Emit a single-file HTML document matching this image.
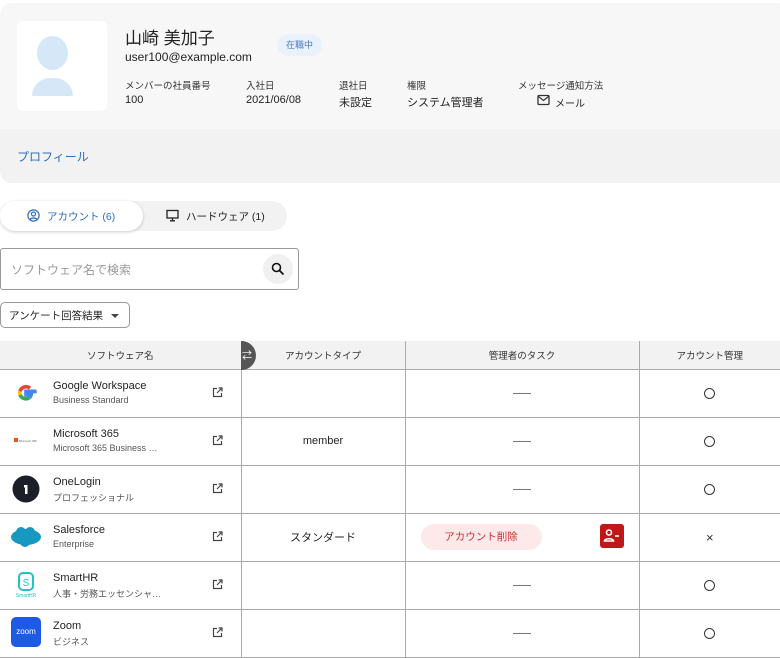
<!DOCTYPE html>
<html><head><meta charset="utf-8"><style>
*{box-sizing:border-box;margin:0;padding:0}
body{width:780px;height:656px;overflow:hidden;background:#fff;font-family:"Liberation Sans","Noto Sans CJK JP",sans-serif;color:#222;position:relative}
.a{position:absolute}
.card{left:0;top:3px;width:790px;height:180px;background:#f7f7f7;border-radius:12px;overflow:hidden}
.band{left:0;top:126px;width:790px;height:54px;background:#f2f2f2}
.lbl{font-size:9.5px;color:#333}
.val{font-size:11px;color:#222}
table{position:absolute;left:0;top:341px;border-collapse:collapse;width:780px;table-layout:fixed}
th{height:28px;background:#f2f2f2;font-size:9.5px;font-weight:normal;color:#333;border-bottom:1px solid #aaa;border-right:1px solid #aaa;padding:0}
td{height:48px;border-bottom:1px solid #aaa;border-right:1px solid #aaa;font-size:11px;text-align:center;position:relative;padding:0}
th:last-child,td:last-child{border-right:none}
.sw{text-align:left}
.ic{position:absolute;left:12px;top:9px;width:28px;height:28px}
.nm{position:absolute;left:53px;top:10px;font-size:11px;color:#222}
.sb{position:absolute;left:53px;top:25px;font-size:9px;color:#555;white-space:nowrap}
.ext{position:absolute;left:212px;top:17px}
.dash{display:inline-block;width:18px;border-top:1px solid #777;vertical-align:middle}
.circ{display:inline-block;width:11px;height:11px;border:1.3px solid #333;border-radius:50%;vertical-align:middle}
</style></head><body>
<div class="a card"><div class="a band"></div></div>
<div class="a" style="left:17px;top:21px;width:90px;height:90px;background:#fff;border-radius:6px"></div>
<div class="a" style="left:37px;top:36px;width:31px;height:34px;background:#d6e8f8;border-radius:50%"></div>
<div class="a" style="left:32px;top:78px;width:41px;height:18px;background:#d6e8f8;border-radius:20px 20px 0 0"></div>
<div class="a" style="left:125px;top:24px;font-size:17px;color:#222">山崎 美加子</div>
<div class="a" style="left:125px;top:50px;font-size:12px">user100@example.com</div>
<div class="a" style="left:277px;top:34px;width:45px;height:22px;border-radius:11px;background:#e9f2fc;font-size:9px;color:#4a7ab8;text-align:center;line-height:22px">在職中</div>
<div class="a lbl" style="left:125px;top:78px">メンバーの社員番号</div>
<div class="a val" style="left:125px;top:94px">100</div>
<div class="a lbl" style="left:246px;top:78px">入社日</div>
<div class="a val" style="left:246px;top:94px">2021/06/08</div>
<div class="a lbl" style="left:339px;top:78px">退社日</div>
<div class="a val" style="left:339px;top:94px">未設定</div>
<div class="a lbl" style="left:407px;top:78px">権限</div>
<div class="a val" style="left:407px;top:94px">システム管理者</div>
<div class="a lbl" style="left:518px;top:78px">メッセージ通知方法</div>
<svg class="a" style="left:537px;top:94px" width="13" height="12" viewBox="0 0 13 12"><rect x="1" y="1.5" width="11" height="9" rx="1" fill="none" stroke="#333" stroke-width="1.3"/><path d="M1.5 2.5l5 4 5-4" fill="none" stroke="#333" stroke-width="1.2"/></svg>
<div class="a val" style="left:555px;top:95px;font-size:10px">メール</div>
<div class="a" style="left:17px;top:148px;font-size:12px;color:#2a6fc0">プロフィール</div>

<div class="a" style="left:0;top:201px;width:287px;height:30px;background:#f2f2f2;border-radius:15px"></div>
<div class="a" style="left:0;top:201px;width:143px;height:30px;background:#fff;border-radius:15px;box-shadow:0 1px 3px rgba(0,0,0,.2)"></div>
<svg class="a" style="left:27px;top:209px" width="13" height="13" viewBox="0 0 13 13"><circle cx="6.5" cy="6.5" r="5.6" fill="none" stroke="#2a6fc0" stroke-width="1.2"/><circle cx="6.5" cy="5" r="2" fill="none" stroke="#2a6fc0" stroke-width="1.2"/><path d="M3 10.5c1.5-2 5.5-2 7 0" fill="none" stroke="#2a6fc0" stroke-width="1.2"/></svg>
<div class="a" style="left:47px;top:209px;font-size:10.5px;color:#2a6fc0">アカウント (6)</div>
<svg class="a" style="left:166px;top:209px" width="13" height="13" viewBox="0 0 13 13"><rect x="1" y="1.5" width="11" height="7.5" fill="none" stroke="#222" stroke-width="1.3"/><path d="M6.5 9v2.5M4 11.8h5" stroke="#222" stroke-width="1.3"/></svg>
<div class="a" style="left:186px;top:209px;font-size:10.5px;color:#222">ハードウェア (1)</div>

<div class="a" style="left:0;top:248px;width:299px;height:42px;border:1px solid #999;border-radius:3px"></div>
<div class="a" style="left:11px;top:261px;font-size:12px;color:#999">ソフトウェア名で検索</div>
<div class="a" style="left:263px;top:254px;width:30px;height:30px;border-radius:50%;background:#f0f0f0"></div>
<svg class="a" style="left:271px;top:262px" width="14" height="14" viewBox="0 0 14 14"><circle cx="5.5" cy="5.5" r="4" fill="none" stroke="#111" stroke-width="1.6"/><path d="M8.5 8.5l4 4" stroke="#111" stroke-width="1.8"/></svg>

<div class="a" style="left:0;top:302px;width:130px;height:26px;border:1px solid #999;border-radius:5px"></div>
<div class="a" style="left:9px;top:308px;font-size:10.5px;color:#222">アンケート回答結果</div>
<div class="a" style="left:111px;top:314px;width:0;height:0;border-left:4px solid transparent;border-right:4px solid transparent;border-top:4px solid #444"></div>

<table>
<colgroup><col style="width:241px"><col style="width:164px"><col style="width:234px"><col style="width:141px"></colgroup>
<tr style="height:28px"><th>ソフトウェア名</th><th>アカウントタイプ</th><th>管理者のタスク</th><th>アカウント管理</th></tr>
<tr style="height:48px"><td class="sw"><svg class="ic" viewBox="0 0 28 28"><path d="M23 14.2c0-.7-.1-1.3-.2-1.9H14v3.6h5.1a4.5 4.5 0 0 1-1.9 2.9" fill="none" stroke="#4285f4" stroke-width="3.6"/><path d="M17.2 18.8A6.3 6.3 0 0 1 8 15.8" fill="none" stroke="#34a853" stroke-width="3.6"/><path d="M8 15.8a6.3 6.3 0 0 1 0-3.6" fill="none" stroke="#fbbc05" stroke-width="3.6"/><path d="M8 12.2a6.3 6.3 0 0 1 10-3" fill="none" stroke="#ea4335" stroke-width="3.6"/></svg><div class="nm">Google Workspace</div><div class="sb">Business Standard</div><svg class="ext" width="11" height="11" viewBox="0 0 11 11"><path d="M5 1.5H1.5v8h8V6M6.5 1h3.5v3.5M10 1L5 6" fill="none" stroke="#444" stroke-width="1.2"/></svg></td><td></td><td><span class="dash"></span></td><td><span class="circ"></span></td></tr>
<tr style="height:48px"><td class="sw"><div class="a" style="left:14px;top:20px;width:24px;height:4px;font-size:3px;color:#666;white-space:nowrap"><span style="display:inline-block;width:4px;height:4px;background:#f25022"></span> Microsoft 365</div><div class="nm">Microsoft 365</div><div class="sb">Microsoft 365 Business …</div><svg class="ext" width="11" height="11" viewBox="0 0 11 11"><path d="M5 1.5H1.5v8h8V6M6.5 1h3.5v3.5M10 1L5 6" fill="none" stroke="#444" stroke-width="1.2"/></svg></td><td>member</td><td><span class="dash"></span></td><td><span class="circ"></span></td></tr>
<tr style="height:48px"><td class="sw"><svg class="ic" viewBox="0 0 28 28"><circle cx="14" cy="14" r="13.5" fill="#1c1f2a"/><path d="M12 10h3.5v9h-2.5v-6.5H12z" fill="#fff"/></svg><div class="nm">OneLogin</div><div class="sb">プロフェッショナル</div><svg class="ext" width="11" height="11" viewBox="0 0 11 11"><path d="M5 1.5H1.5v8h8V6M6.5 1h3.5v3.5M10 1L5 6" fill="none" stroke="#444" stroke-width="1.2"/></svg></td><td></td><td><span class="dash"></span></td><td><span class="circ"></span></td></tr>
<tr style="height:48px"><td class="sw"><svg class="ic" style="left:10px;width:32px" viewBox="0 0 32 28"><ellipse cx="16" cy="14" rx="15" ry="8" fill="#1798c1"/><circle cx="11" cy="9" r="5" fill="#1798c1"/><circle cx="20" cy="9" r="5" fill="#1798c1"/><circle cx="15" cy="19" r="5" fill="#1798c1"/></svg><div class="nm">Salesforce</div><div class="sb">Enterprise</div><svg class="ext" width="11" height="11" viewBox="0 0 11 11"><path d="M5 1.5H1.5v8h8V6M6.5 1h3.5v3.5M10 1L5 6" fill="none" stroke="#444" stroke-width="1.2"/></svg></td><td>スタンダード</td><td><div class="a" style="left:15px;top:10px;width:121px;height:26px;border-radius:13px;background:#fde9e9;color:#c33;font-size:10.5px;line-height:26px">アカウント削除</div><div class="a" style="left:194px;top:10px;width:24px;height:24px;border-radius:3px;background:#c01818"><svg width="24" height="24" viewBox="0 0 24 24"><circle cx="9" cy="8.5" r="2.5" fill="none" stroke="#fff" stroke-width="1.6"/><path d="M4.5 17c0-3 9-3 9 0z" fill="none" stroke="#fff" stroke-width="1.6"/><path d="M15 12h4" stroke="#fff" stroke-width="1.6"/></svg></div></td><td style="font-size:13px;color:#333">×</td></tr>
<tr style="height:48px"><td class="sw"><svg class="ic" viewBox="0 0 28 28"><rect x="7" y="2" width="14" height="17" rx="4" fill="none" stroke="#22c3c7" stroke-width="2"/><text x="14" y="15" font-size="10" fill="#22c3c7" text-anchor="middle" font-family="Liberation Sans">S</text><text x="14" y="26" font-size="5" fill="#22c3c7" text-anchor="middle" font-family="Liberation Sans">SmartHR</text></svg><div class="nm">SmartHR</div><div class="sb">人事・労務エッセンシャ…</div><svg class="ext" width="11" height="11" viewBox="0 0 11 11"><path d="M5 1.5H1.5v8h8V6M6.5 1h3.5v3.5M10 1L5 6" fill="none" stroke="#444" stroke-width="1.2"/></svg></td><td></td><td><span class="dash"></span></td><td><span class="circ"></span></td></tr>
<tr style="height:48px"><td class="sw"><div class="ic" style="width:30px;height:30px;left:11px;top:7px;border-radius:5px;background:#1e5ae6;color:#fff;font-size:8px;line-height:30px;text-align:center">zoom</div><div class="nm">Zoom</div><div class="sb">ビジネス</div><svg class="ext" width="11" height="11" viewBox="0 0 11 11"><path d="M5 1.5H1.5v8h8V6M6.5 1h3.5v3.5M10 1L5 6" fill="none" stroke="#444" stroke-width="1.2"/></svg></td><td></td><td><span class="dash"></span></td><td><span class="circ"></span></td></tr>
</table>
<div class="a" style="left:241px;top:341px;width:15px;height:29px;background:#555;border-radius:0 15px 15px 0"></div>
<div class="a" style="left:242px;top:347px;font-size:10px;color:#fff">⇄</div>
</body></html>
